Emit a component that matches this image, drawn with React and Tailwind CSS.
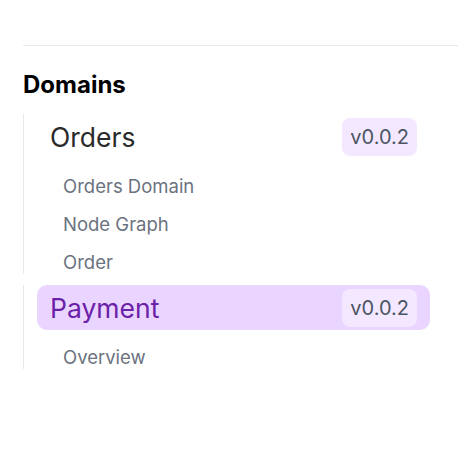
const domains = [
  {
    name: 'Orders',
    version: 'v0.0.2',
    active: false,
    items: ['Orders Domain', 'Node Graph', 'Order'],
  },
  {
    name: 'Payment',
    version: 'v0.0.2',
    active: true,
    items: ['Overview'],
  },
];

const App = () => {
  return (
    <div className="w-[458px] h-[458px] bg-white pl-[23px] pt-[45px]" style={{ fontFamily: 'Inter, "Noto Sans", sans-serif' }}>
      <div className="border-t border-[#e8e9ec]" />
      <h2 className="mt-[25px] text-[24px] leading-[28px] font-bold text-black">Domains</h2>

      <div className="mt-[15px] mr-[28px] flex flex-col gap-[11px]">
        {domains.map((d) => (
          <div key={d.name} className="border-l border-[#e8e9ec]">
            <div
              className={`ml-[13px] h-[45px] px-[13px] flex items-center justify-between rounded-[10px] ${
                d.active ? 'bg-[#e9d5ff]' : ''
              }`}
            >
              <span className={`text-[26.5px] pt-[2px] ${d.active ? 'text-[#6b21a8]' : 'text-[#2a2a2a]'}`}>{d.name}</span>
              <span className="h-[38px] px-[8px] flex items-center rounded-[8px] text-[20px] text-[#4b5563] bg-[#f3e8ff]">
                {d.version}
              </span>
            </div>
            <ul className="mt-[15px] flex flex-col gap-[14px] pl-[39px]">
              {d.items.map((item) => (
                <li key={item} className="text-[18.5px] leading-[24px] text-[#6b7280]">
                  {item}
                </li>
              ))}
            </ul>
          </div>
        ))}
      </div>
    </div>
  );
};

export default App;
